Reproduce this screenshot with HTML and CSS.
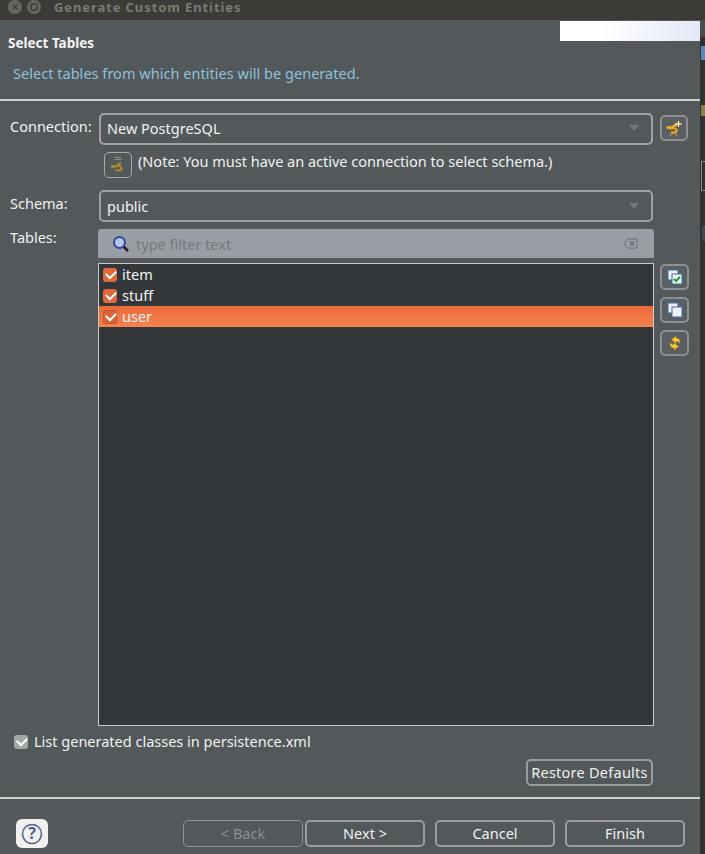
FILE: index.html
```html
<!DOCTYPE html>
<html lang="en">
<head>
<meta charset="utf-8">
<title>Generate Custom Entities</title>
<link rel="stylesheet" href="styles.css">
</head>
<body>
<div class="window">
  <header class="titlebar">
    <span class="wbtn"><svg viewBox="0 0 14 14" width="14" height="14"><path d="M4.500 4.500l5 5M9.500 4.500l-5 5" stroke="#3e3d39" stroke-width="1.300" fill="none"/></svg></span>
    <span class="wbtn"><svg viewBox="0 0 14 14" width="14" height="14"><rect x="4" y="4" width="6" height="6" rx="1" stroke="#3e3d39" stroke-width="1.500" fill="none"/></svg></span>
    <span class="title">Generate Custom Entities</span>
  </header>
  <div class="stage">
    <main class="dialog">
      <section class="banner">
        <div class="banner-text">
          <h1>Select Tables</h1>
          <p>Select tables from which entities will be generated.</p>
        </div>
        <div class="banner-image"></div>
      </section>
      <section class="form">
        <label class="lbl lbl-conn">Connection:</label>
        <div class="combo"><span>New PostgreSQL</span><i class="arrow"></i></div>
        <button class="icon-btn btn-conn" aria-label="Add connection">
          <svg viewBox="0 0 18 18" width="18" height="18"><path d="M1.500 8.500H6c3 0 3.500-3 6-3" stroke="#f2bb22" stroke-width="2.400" fill="none"/><path d="M5 9.500c3 0 6-.5 6.500 1.500s-2.500 3.500-5.500 2.500" stroke="#e6a51a" stroke-width="2.400" fill="none"/><path d="M6.500 11c1.500 0 3 0 3.500-1" stroke="#7a5310" fill="none"/><path d="M13.500 2v6M10.500 5h6" stroke="#fff0a0" stroke-width="1.300"/><path d="M5 16h1M11 16h1" stroke="#e6e6e6"/></svg>
        </button>

        <div class="note-row">
          <button class="icon-btn btn-schema" aria-label="Reconnect">
            <svg viewBox="0 0 18 18" width="18" height="18"><path d="M6 1.500h6M5 3.500h8" stroke="#8d8f7e"/><path d="M2 10.500h4c3 0 3-3 6-3" stroke="#b09038" stroke-width="2.400" fill="none"/><path d="M6 10c3 0 6 0 6.500 2s-3 3-6 2" stroke="#a3842f" stroke-width="2.400" fill="none"/><path d="M7 12c1.500 0 3 0 3.500-1" stroke="#5f4c1c" fill="none"/></svg>
          </button>
          <span>(Note: You must have an active connection to select schema.)</span>
        </div>

        <label class="lbl lbl-schema">Schema:</label>
        <div class="combo combo-schema"><span>public</span><i class="arrow"></i></div>

        <label class="lbl lbl-tables">Tables:</label>
        <div class="filter">
          <svg class="lens" viewBox="0 0 18 18" width="18" height="18"><path d="M11 11l5 5" stroke="#222" stroke-width="2.500"/><circle cx="7.500" cy="7.500" r="5.500" fill="#b6c6e4" stroke="#2c4aa0" stroke-width="2"/></svg>
          <span class="placeholder">type filter text</span>
          <svg class="clear" viewBox="0 0 15 11" width="15" height="11"><path d="M4.500 1H14v9H4.500L1 5.500z" fill="none" stroke="#686d71"/><path d="M7 3.500l4 4M11 3.500l-4 4" stroke="#686d71" stroke-width="1.500"/></svg>
        </div>

        <div class="table-wrap">
          <ul class="table">
            <li><i class="tick"></i><span>item</span></li>
            <li><i class="tick"></i><span>stuff</span></li>
            <li class="selected"><i class="tick"></i><span>user</span></li>
          </ul>
          <div class="side">
            <button class="icon-btn" aria-label="Select all">
              <svg viewBox="0 0 16 16" width="16" height="16"><rect x="1" y="1" width="10" height="10" fill="#eef1f5" stroke="#3a6ea5"/><rect x="5" y="5" width="10" height="10" fill="#eef1f5" stroke="#3a6ea5"/><path d="M7 10l2 2 4-4" stroke="#1f9a2c" stroke-width="2" fill="none"/></svg>
            </button>
            <button class="icon-btn" aria-label="Deselect all">
              <svg viewBox="0 0 16 16" width="16" height="16"><rect x="1" y="1" width="10" height="10" fill="#eef1f5" stroke="#3a6ea5"/><rect x="5" y="5" width="10" height="10" fill="#f1f2f4" stroke="#3a6ea5"/></svg>
            </button>
            <button class="icon-btn" aria-label="Invert selection">
              <svg viewBox="0 0 16 16" width="16" height="16"><path d="M9 1L4.500 4.500 9 8.500V6.500c2 0 3 .5 4 2 .5-3-1-5.500-4-5.500z" fill="#f6c62e" stroke="#a87a12" stroke-width=".5"/><path d="M7 15l4.500-3.500L7 7.500v2c-2 0-3-.5-4-2-.5 3 1 5.500 4 5.500z" fill="#f6c62e" stroke="#a87a12" stroke-width=".5"/></svg>
            </button>
          </div>
        </div>

        <div class="persist">
          <i class="tick tick-grey"></i><span>List generated classes in persistence.xml</span>
        </div>
        <div class="restore-row"><button class="btn restore">Restore Defaults</button></div>
      </section>
      <footer class="footer">
        <button class="help" aria-label="Help">
          <svg viewBox="0 0 22 22" width="22" height="22"><circle cx="11" cy="11" r="9.500" fill="none" stroke="#4d6289" stroke-width="1.500"/><text x="11" y="16" text-anchor="middle" class="help-q">?</text></svg>
        </button>
        <div class="actions">
          <button class="btn disabled">&lt; Back</button>
          <button class="btn next">Next &gt;</button>
          <button class="btn">Cancel</button>
          <button class="btn">Finish</button>
        </div>
      </footer>
    </main>
    <aside class="strip">
      <div class="strip-top"></div>
      <div class="strip-dot strip-blue"></div>
      <div class="strip-dot strip-yellow"></div>
      <div class="strip-dot strip-box"></div>
      <div class="strip-dot strip-arc"></div>
    </aside>
  </div>
</div>
</body>
</html>
```
FILE: styles.css
```css
* { box-sizing: border-box; }
html, body { margin: 0; padding: 0; }
body { width: 705px; height: 854px; overflow: hidden; background: #53585b; color: #f0f2f2; font-family: "Noto Sans", "Open Sans", sans-serif; font-size: 14.5px; }
button { font: inherit; color: inherit; padding: 0; margin: 0; background: transparent; cursor: default; }
i { display: block; font-style: normal; }

.titlebar { height: 20px; background: #3d3b37; display: flex; align-items: flex-start; padding-left: 8px; gap: 5px; }
.wbtn { width: 14px; height: 14px; border-radius: 50%; background: #666663; display: flex; }
.title { margin-left: 8px; line-height: 14px; font-weight: 700; font-size: 13px; letter-spacing: .9px; color: #7b7a74; }

.stage { display: flex; height: 834px; }
.dialog { width: 700px; display: flex; flex-direction: column; }
.strip { width: 5px; background: #2f3133; position: relative; }
.strip-top { height: 17px; background: #484c4e; }
.strip-dot { position: absolute; left: 1px; width: 4px; }
.strip-blue { top: 26px; height: 14px; background: #5b87b8; }
.strip-yellow { top: 85px; height: 11px; background: #8a7f4f; }
.strip-box { top: 141px; height: 30px; border: 1px solid #888; border-right: 0; }
.strip-arc { top: 205px; left: 2px; height: 16px; border-radius: 3px 0 0 0; background: #45484a; }

.banner { height: 79px; display: flex; justify-content: space-between; align-items: flex-start; }
.banner-text { padding-left: 8px; }
.banner h1 { margin: 14px 0 0; font-size: 13.500px; line-height: 18px; font-weight: 700; color: #f2f3f3; }
.banner p { margin: 11px 0 0 5px; line-height: 20px; letter-spacing: .03px; color: #8ec1dc; }
.banner-image { width: 140px; height: 20px; margin-top: 1px; background: linear-gradient(100deg, #fff 30%, #e3e8f6 100%); }

.form { border-top: 2px solid #cfd1d1; height: 698px; display: grid; grid-template-columns: 89px 554px 35px; grid-auto-rows: min-content; padding-left: 10px; }
.lbl { line-height: 20px; }
.lbl-conn { padding-top: 15px; }
.combo { margin-top: 12px; height: 32px; border: 2px solid #a0a3a4; border-radius: 5px; display: flex; justify-content: space-between; align-items: center; padding: 0 12px 2px 6px; background: #53585b; }
.arrow { width: 0; height: 0; border: 5px solid transparent; border-top: 6px solid #73787b; border-bottom: 0; }
.btn-conn { margin: 14px 0 0 7px; }
.icon-btn { width: 28px; height: 26px; border: 2px solid #8c9091; border-radius: 5px; display: flex; align-items: center; justify-content: center; background: #5a5f62; }

.note-row { grid-column: 2 / 4; display: flex; align-items: flex-start; gap: 6px; margin-top: 7px; padding-left: 5px; }
.note-row span { line-height: 20px; margin-top: -1px; white-space: nowrap; }
.btn-schema { border-width: 1px; border-color: #a6a9a9; background: transparent; }

.lbl-schema { grid-column: 1; padding-top: 15px; }
.combo-schema { grid-column: 2; margin-top: 12px; padding-bottom: 0; }
.lbl-tables { grid-column: 1; padding-top: 5px; }
.filter { grid-column: 2; margin: 7px -1px 0; height: 29px; background: #989ea4; border-radius: 3px 3px 0 0; display: flex; align-items: center; padding: 0 16px 0 14px; }
.lens { flex: none; }
.placeholder { margin-left: 6px; flex: 1; color: #74797d; }

.table-wrap { grid-column: 2 / 4; margin-top: 5px; display: flex; margin-left: -1px; }
.table { list-style: none; margin: 0; padding: 0; flex: none; width: 556px; height: 463px; background: #34373a; border: 1px solid #c8cacb; }
.table li { height: 21px; display: flex; align-items: center; gap: 5px; padding-left: 4px; }
.table li span { margin-top: -2px; }
.table li.selected { background: linear-gradient(#ea6a3a, #f5834f); }
.tick { width: 14px; height: 14px; border-radius: 3px; background: #e0683a; position: relative; flex: none; }
.tick::after { content: ""; position: absolute; left: 3px; top: 2px; width: 8px; height: 5px; border-left: 2px solid #fff; border-bottom: 2px solid #fff; transform: rotate(-45deg); }
.selected .tick { background: #d9653a; box-shadow: 0 0 0 1px #c4562f inset; }
.side { display: flex; flex: none; flex-direction: column; gap: 7px; margin: 1px 0 0 6px; }
.side .icon-btn { width: 29px; height: 26px; }

.persist { grid-column: 1 / 4; display: flex; align-items: center; gap: 6px; margin-top: 6px; margin-left: 4px; height: 20px; }
.persist span { margin-top: -2px; }
.tick-grey { background: #a3a5a6; }
.restore-row { grid-column: 1 / 3; display: flex; justify-content: flex-end; margin-top: 7px; }
.btn { width: 120px; height: 27px; border: 2px solid #9a9d9e; border-radius: 5px; padding-bottom: 2px; line-height: 20px; background: #53585b; }
.restore { width: 127px; letter-spacing: .25px; }

.footer { border-top: 2px solid #cfd1d1; flex: 1; display: flex; align-items: flex-start; justify-content: space-between; padding: 20px 15px 0 16px; }
.help { width: 32px; height: 29px; border: 0; border-radius: 6px; background: #f2f1f0; display: flex; align-items: center; justify-content: center; }
.help-q { font-size: 16px; font-weight: 700; fill: #4d6289; }
.actions { display: flex; padding-top: 1px; gap: 10px; }
.actions .next { margin-left: -8px; }
.disabled { color: #8c9092; border-width: 1px; border-color: #8f9394; }
```
